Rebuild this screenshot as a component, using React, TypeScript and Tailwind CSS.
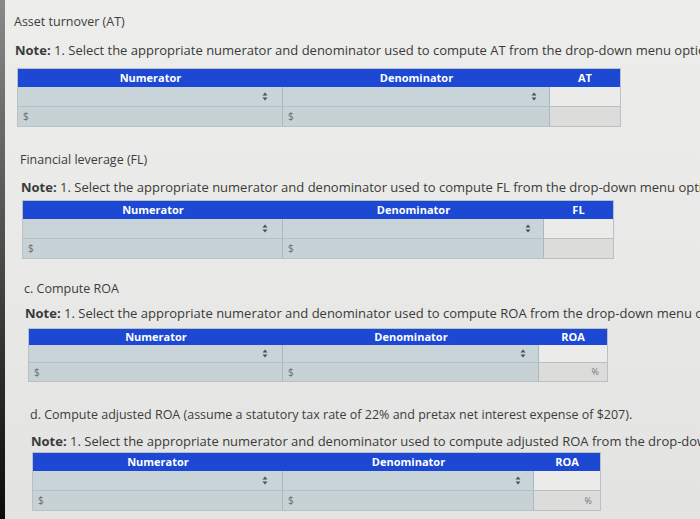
import React from "react";

function SelectArrows() {
  return (
    <svg width="6" height="9" viewBox="0 0 6 9" className="shrink-0">
      <path d="M3 0.5L5.5 3.5H0.5Z" fill="#4a4f52" />
      <path d="M3 8.5L5.5 5.5H0.5Z" fill="#4a4f52" />
    </svg>
  );
}

type SectionProps = {
  wrap: string;
  titleClass: string;
  noteClass: string;
  tableClass: string;
  cols: string;
  headH: string;
  row1H: string;
  row2H: string;
  title: string;
  note: string;
  label: string;
  percent?: boolean;
};

function Section({
  wrap,
  titleClass,
  noteClass,
  tableClass,
  cols,
  headH,
  row1H,
  row2H,
  title,
  note,
  label,
  percent,
}: SectionProps) {
  return (
    <div className={wrap}>
      <p className={`text-[12.5px] leading-4 text-[#3d3d3d] whitespace-nowrap ${titleClass}`}>{title}</p>
      <p className={`text-[13px] leading-4 text-[#3a3a3a] whitespace-nowrap ${noteClass}`}>
        <span className="font-bold">Note:</span> 1. {note}
      </p>
      <div className={`border border-[#b9c1c4] ${tableClass}`}>
        <div className={`grid bg-[#1c48d4] text-[11px] font-bold text-white ${cols} ${headH}`}>
          <div className="flex items-center justify-center">Numerator</div>
          <div className="flex items-center justify-center">Denominator</div>
          <div className="flex items-center justify-center">{label}</div>
        </div>
        <div className={`grid border-b border-[#b7bfc2] ${cols} ${row1H}`}>
          <div className="flex items-center justify-end border-r border-[#aeb7bb] bg-[#c9d4d9] pr-[14px]">
            <SelectArrows />
          </div>
          <div className="flex items-center justify-end border-r border-[#aeb7bb] bg-[#c9d4d9] pr-[12px]">
            <SelectArrows />
          </div>
          <div className="bg-[#ebebe9]" />
        </div>
        <div className={`grid ${cols} ${row2H}`}>
          <div className="flex items-center border-r border-[#aeb7bb] bg-[#c7d2d7] pl-[5px] text-[10px] text-[#666b6e]">
            $
          </div>
          <div className="flex items-center border-r border-[#aeb7bb] bg-[#c7d2d7] pl-[5px] text-[10px] text-[#666b6e]">
            $
          </div>
          <div className="flex items-center justify-end bg-[#dcdcda] pr-[8px] text-[9px] text-[#777]">
            {percent ? "%" : ""}
          </div>
        </div>
      </div>
    </div>
  );
}

export default function App() {
  return (
    <div
      className="relative h-[519px] w-[700px] overflow-hidden bg-gradient-to-b from-[#ededeb] via-[#e9e9e7] to-[#e3e3e1]"
      style={{ fontFamily: '"Open Sans", "Noto Sans", sans-serif' }}
    >
      <div className="absolute left-0 top-0 h-full w-[5px] bg-gradient-to-b from-[#8a8a8a] via-[#4a4a4a] to-[#0c0c0c]" />

      <Section
        wrap="pt-[14px]"
        titleClass="pl-[14px]"
        noteClass="mt-[12px] pl-[15px]"
        tableClass="ml-[17px] mt-[10px] w-[604px]"
        cols="grid-cols-[265px_267px_1fr]"
        headH="h-[18px]"
        row1H="h-[20px]"
        row2H="h-[19px]"
        title="Asset turnover (AT)"
        note="Select the appropriate numerator and denominator used to compute AT from the drop-down menu options."
        label="AT"
      />

      <Section
        wrap="pt-[25px]"
        titleClass="pl-[20px]"
        noteClass="mt-[11px] pl-[21px]"
        tableClass="ml-[22px] mt-[5px] w-[592px]"
        cols="grid-cols-[260px_261px_1fr]"
        headH="h-[18px]"
        row1H="h-[20px]"
        row2H="h-[19px]"
        title="Financial leverage (FL)"
        note="Select the appropriate numerator and denominator used to compute FL from the drop-down menu options."
        label="FL"
      />

      <Section
        wrap="pt-[22px]"
        titleClass="pl-[24px]"
        noteClass="mt-[8px] pl-[25px]"
        tableClass="ml-[28px] mt-[7px] w-[580px]"
        cols="grid-cols-[254px_256px_1fr]"
        headH="h-[16px]"
        row1H="h-[18px]"
        row2H="h-[18px]"
        title="c. Compute ROA"
        note="Select the appropriate numerator and denominator used to compute ROA from the drop-down menu options."
        label="ROA"
        percent
      />

      <Section
        wrap="pt-[25px]"
        titleClass="pl-[30px]"
        noteClass="mt-[10px] pl-[31px]"
        tableClass="ml-[32px] mt-[3px] w-[569px]"
        cols="grid-cols-[250px_251px_1fr]"
        headH="h-[18px]"
        row1H="h-[20px]"
        row2H="h-[19px]"
        title="d. Compute adjusted ROA (assume a statutory tax rate of 22% and pretax net interest expense of $207)."
        note="Select the appropriate numerator and denominator used to compute adjusted ROA from the drop-down menu options."
        label="ROA"
        percent
      />
    </div>
  );
}
